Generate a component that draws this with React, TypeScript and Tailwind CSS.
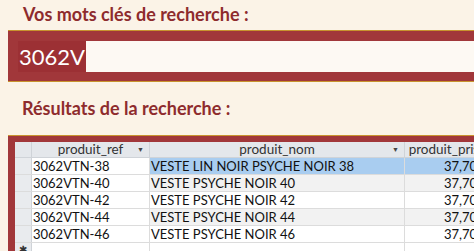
import React from "react";

const rows = [
    { ref: "3062VTN-38", nom: "VESTE LIN NOIR PSYCHE NOIR 38", prix: "37,70" },
    { ref: "3062VTN-40", nom: "VESTE PSYCHE NOIR 40", prix: "37,70" },
    { ref: "3062VTN-42", nom: "VESTE PSYCHE NOIR 42", prix: "37,70" },
    { ref: "3062VTN-44", nom: "VESTE PSYCHE NOIR 44", prix: "37,70" },
    { ref: "3062VTN-46", nom: "VESTE PSYCHE NOIR 46", prix: "37,70" },
];

const font = { fontFamily: 'Lato, "Open Sans", sans-serif' };

function HeaderCell({ label, width }: { label: string; width: string }) {
    return (
        <div className={`${width} relative h-full border-r border-[#cfd3d8] flex items-center justify-center text-[13.5px] text-[#333]`}>
            <span>{label}</span>
            <span className="absolute right-[5px] top-[2px] text-[7px] text-[#444]">▼</span>
        </div>
    );
}

export default function App() {
    return (
        <div className="w-[474px] h-[251px] overflow-hidden bg-[#fbf3e7]" style={font}>
            {/* Search */}
            <h1 className="h-[30px] pl-[23px] pt-[1px] text-[18px] font-bold leading-[26px] text-[#8e2b2d]">
                Vos mots clés de recherche :
            </h1>
            <div className="ml-[8px] w-[480px] h-[52px] bg-[#a1373a] border-y border-[#c8932e] pl-[10px] pt-[10px]">
                <div className="h-[31px] bg-[#fdf9f3] flex">
                    <span className="h-full bg-[#9c3034] text-white text-[22px] leading-[31px] px-[1px]">3062V</span>
                </div>
            </div>

            {/* Results */}
            <h2 className="h-[53px] pl-[22px] pt-[13px] text-[18px] font-bold leading-[26px] text-[#8e2b2d]">
                Résultats de la recherche :
            </h2>
            <div className="ml-[8px] w-[490px] bg-[#a1373a] border-t border-[#c8932e] pl-[7px] pt-[6px]">
                <div className="bg-white">
                    {/* header */}
                    <div className="flex h-[16px] bg-[#e4e7eb] border-b border-[#cfd3d8]">
                        <div className="w-[17px] h-full border-r border-[#cfd3d8]" />
                        <HeaderCell label="produit_ref" width="w-[118px]" />
                        <HeaderCell label="produit_nom" width="w-[255px]" />
                        <HeaderCell label="produit_prix" width="w-[80px]" />
                    </div>
                    {rows.map((r, i) => (
                        <div key={r.ref} className={`flex h-[17px] border-b border-[#dcdcdc] text-[13px] text-[#111] ${i % 2 === 1 ? "bg-[#f2f2f2]" : "bg-white"}`}>
                            <div className="w-[17px] h-full bg-[#e9ebee] border-r border-[#cfd3d8]" />
                            <div className="w-[118px] h-full border-r border-[#dcdcdc] pl-[1px] leading-[16px] bg-white">
                                {r.ref}
                            </div>
                            <div className={`w-[255px] h-full border-r border-[#dcdcdc] pl-[1px] leading-[16px] ${i === 0 ? "bg-[#a9cdf0]" : ""}`}>
                                {r.nom}
                            </div>
                            <div className={`w-[80px] h-full pr-[8px] text-right leading-[16px] ${i === 0 ? "bg-[#a9cdf0]" : ""}`}>
                                {r.prix}
                            </div>
                        </div>
                    ))}
                    {/* new record */}
                    <div className="flex h-[17px] bg-white">
                        <div className="w-[17px] h-full bg-[#e9ebee] border-r border-[#cfd3d8] flex items-start justify-center text-[10px] leading-[12px] text-[#333]">✱</div>
                        <div className="w-[118px] h-full border-r border-[#dcdcdc]" />
                        <div className="w-[255px] h-full border-r border-[#dcdcdc]" />
                        <div className="w-[80px] h-full" />
                    </div>
                </div>
            </div>
        </div>
    );
}
